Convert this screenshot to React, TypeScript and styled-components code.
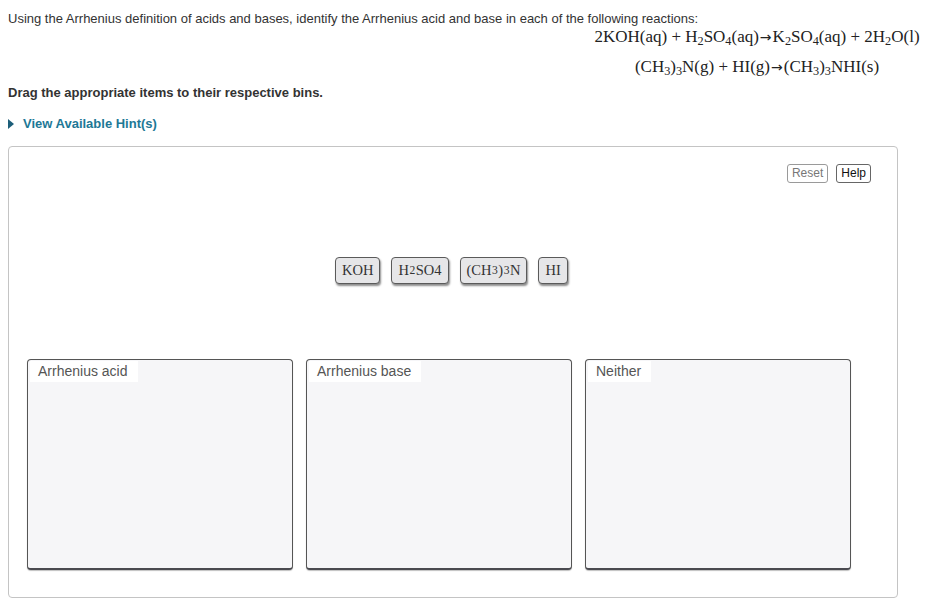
import React from "react";
import styled, { createGlobalStyle } from "styled-components";

const Global = createGlobalStyle`
  html, body { margin: 0; padding: 0; background: #fff; }
  body { font-family: "Liberation Sans", Arial, sans-serif; color: #333; }
`;

const Page = styled.div`
  width: 951px;
  padding-top: 11px;
`;

const Prompt = styled.p`
  margin: 0 0 0 8px;
  font-size: 13px;
  line-height: 15px;
  color: #333;
`;

const Equations = styled.div`
  width: 400px;
  margin-left: 557px;
  display: flex;
  flex-direction: column;
  align-items: center;
  gap: 12px;
  margin-top: 2px;
`;

const Eq = styled.div`
  font-family: "Liberation Serif", "Times New Roman", serif;
  font-size: 17px;
  line-height: 18px;
  color: #222;
  white-space: nowrap;
  sub {
    font-size: 0.72em;
    vertical-align: -0.25em;
    line-height: 0;
  }
`;

const Arrow = styled.span`
  font-family: "DejaVu Sans", sans-serif;
  font-size: 14px;
  margin: 0 1px;
`;

const Instruction = styled.p`
  margin: 9px 0 0 8px;
  font-size: 13px;
  font-weight: bold;
  line-height: 16px;
  color: #333;
`;

const Hint = styled.div`
  margin: 15px 0 0 8px;
  display: flex;
  align-items: center;
  gap: 9px;
  font-size: 13px;
  font-weight: bold;
  color: #1d7896;
  line-height: 16px;
`;

const Triangle = styled.span`
  width: 0;
  height: 0;
  border-top: 5px solid transparent;
  border-bottom: 5px solid transparent;
  border-left: 6px solid #1d5f7a;
`;

const Board = styled.div`
  margin: 14px 0 0 8px;
  width: 888px;
  height: 450px;
  border: 1px solid #c4c4c4;
  border-radius: 4px;
  display: flex;
  flex-direction: column;
`;

const Toolbar = styled.div`
  display: flex;
  justify-content: flex-end;
  gap: 8px;
  padding: 17px 26px 0 0;
`;

const ToolButton = styled.button<{ $muted?: boolean }>`
  font-family: "Liberation Sans", Arial, sans-serif;
  font-size: 12px;
  height: 19px;
  padding: 0 4px;
  background: #fff;
  border: 1px solid ${(p) => (p.$muted ? "#9a9a9a" : "#666")};
  border-radius: 3px;
  color: ${(p) => (p.$muted ? "#777" : "#111")};
  line-height: 17px;
`;

const TileRow = styled.div`
  display: flex;
  gap: 11px;
  margin: 74px 0 0 326px;
`;

const Tile = styled.div`
  font-family: "Liberation Serif", "Times New Roman", serif;
  font-size: 14.5px;
  color: #333;
  height: 25px;
  padding: 0 6px;
  display: flex;
  align-items: center;
  background: #e6e6e8;
  border: 1px solid #5a5a5a;
  border-radius: 4px;
  box-shadow: 1px 2px 2px rgba(0, 0, 0, 0.45);
  sub {
    font-size: 0.8em;
    vertical-align: -0.2em;
    line-height: 0;
    margin: 0 0.5px;
  }
`;

const Bins = styled.div`
  display: flex;
  gap: 13px;
  margin: 75px 0 0 18px;
`;

const Bin = styled.div`
  width: 262px;
  height: 207px;
  background: #f6f6f8;
  border: 1px solid #555;
  border-bottom: 2px solid #4a4a50;
  border-radius: 4px;
  box-shadow: 0 1px 1px rgba(0, 0, 0, 0.25);
  padding: 1px 0 0 2px;
`;

const BinLabel = styled.span`
  display: inline-block;
  background: #fff;
  padding: 2px 10px 2px 8px;
  font-size: 14px;
  line-height: 17px;
  color: #555;
`;

export default function App() {
  return (
    <Page>
      <Global />
      <Prompt>
        Using the Arrhenius definition of acids and bases, identify the Arrhenius acid and base in each of the following reactions:
      </Prompt>
      <Equations>
        <Eq>
          2KOH(aq) + H<sub>2</sub>SO<sub>4</sub>(aq)<Arrow>→</Arrow>K<sub>2</sub>SO<sub>4</sub>(aq) + 2H<sub>2</sub>O(l)
        </Eq>
        <Eq>
          (CH<sub>3</sub>)<sub>3</sub>N(g) + HI(g)<Arrow>→</Arrow>(CH<sub>3</sub>)<sub>3</sub>NHI(s)
        </Eq>
      </Equations>
      <Instruction>Drag the appropriate items to their respective bins.</Instruction>
      <Hint>
        <Triangle />
        View Available Hint(s)
      </Hint>
      <Board>
        <Toolbar>
          <ToolButton $muted>Reset</ToolButton>
          <ToolButton>Help</ToolButton>
        </Toolbar>
        <TileRow>
          <Tile>KOH</Tile>
          <Tile>
            H<sub>2</sub>SO4
          </Tile>
          <Tile>
            (CH<sub>3</sub>)<sub>3</sub>N
          </Tile>
          <Tile>HI</Tile>
        </TileRow>
        <Bins>
          <Bin>
            <BinLabel>Arrhenius acid</BinLabel>
          </Bin>
          <Bin>
            <BinLabel>Arrhenius base</BinLabel>
          </Bin>
          <Bin>
            <BinLabel>Neither</BinLabel>
          </Bin>
        </Bins>
      </Board>
    </Page>
  );
}
